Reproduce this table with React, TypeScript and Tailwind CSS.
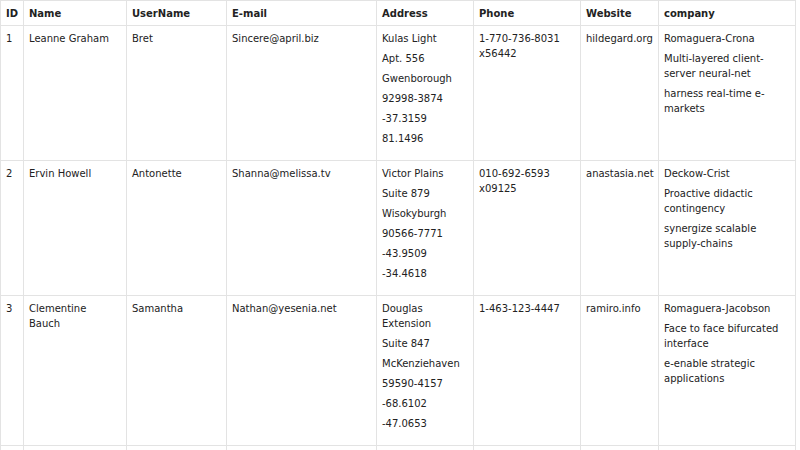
import React from 'react';

type User = {
  id: number;
  name: string;
  username: string;
  email: string;
  address: string[];
  phone: string;
  website: string;
  company: string[];
};

const users: User[] = [
  {
    id: 1,
    name: 'Leanne Graham',
    username: 'Bret',
    email: 'Sincere@april.biz',
    address: ['Kulas Light', 'Apt. 556', 'Gwenborough', '92998-3874', '-37.3159', '81.1496'],
    phone: '1-770-736-8031 x56442',
    website: 'hildegard.org',
    company: ['Romaguera-Crona', 'Multi-layered client-server neural-net', 'harness real-time e-markets'],
  },
  {
    id: 2,
    name: 'Ervin Howell',
    username: 'Antonette',
    email: 'Shanna@melissa.tv',
    address: ['Victor Plains', 'Suite 879', 'Wisokyburgh', '90566-7771', '-43.9509', '-34.4618'],
    phone: '010-692-6593 x09125',
    website: 'anastasia.net',
    company: ['Deckow-Crist', 'Proactive didactic contingency', 'synergize scalable supply-chains'],
  },
  {
    id: 3,
    name: 'Clementine Bauch',
    username: 'Samantha',
    email: 'Nathan@yesenia.net',
    address: ['Douglas Extension', 'Suite 847', 'McKenziehaven', '59590-4157', '-68.6102', '-47.0653'],
    phone: '1-463-123-4447',
    website: 'ramiro.info',
    company: ['Romaguera-Jacobson', 'Face to face bifurcated interface', 'e-enable strategic applications'],
  },
  {
    id: 4,
    name: 'Patricia Lebsack',
    username: 'Karianne',
    email: 'Julianne.OConner@kory.org',
    address: ['Hoeger Mall', 'Apt. 692', 'South Elvis', '53919-4257', '29.4572', '-164.2990'],
    phone: '493-170-9623 x156',
    website: 'kale.biz',
    company: ['Robel-Corkery', 'Multi-tiered zero tolerance productivity', 'transition cutting-edge web services'],
  },
];

const headers = ['ID', 'Name', 'UserName', 'E-mail', 'Address', 'Phone', 'Website', 'company'];

// shared cell style for body cells
const td = 'border border-[#e3e3e3] pl-[5px] pr-[7px] pt-[5px] pb-[9px] align-top';

export default function App() {
  return (
    <div
      className="h-[450px] w-[800px] overflow-hidden bg-white text-[10px] leading-[15px] text-[#222]"
      style={{ fontFamily: '"DejaVu Sans", sans-serif' }}
    >
      <table className="w-[796px] table-fixed border-collapse">
        <colgroup>
          <col className="w-[23px]" />
          <col className="w-[103px]" />
          <col className="w-[100px]" />
          <col className="w-[150px]" />
          <col className="w-[97px]" />
          <col className="w-[107px]" />
          <col className="w-[78px]" />
          <col />
        </colgroup>
        <thead>
          <tr>
            {headers.map((h) => (
              <th
                key={h}
                className="border border-[#e3e3e3] pl-[5px] pr-[7px] pt-[5px] pb-[4px] text-left align-top font-bold"
              >
                {h}
              </th>
            ))}
          </tr>
        </thead>
        <tbody>
          {users.map((u) => (
            <tr key={u.id}>
              <td className={td}>{u.id}</td>
              <td className={td}>{u.name}</td>
              <td className={td}>{u.username}</td>
              <td className={td}>{u.email}</td>
              <td className={td}>
                {u.address.map((line) => (
                  <p key={line} className="mb-[5px]">
                    {line}
                  </p>
                ))}
              </td>
              <td className={td}>{u.phone}</td>
              <td className={td}>{u.website}</td>
              <td className={td}>
                {u.company.map((line) => (
                  <p key={line} className="mb-[5px]">
                    {line}
                  </p>
                ))}
              </td>
            </tr>
          ))}
        </tbody>
      </table>
    </div>
  );
}
